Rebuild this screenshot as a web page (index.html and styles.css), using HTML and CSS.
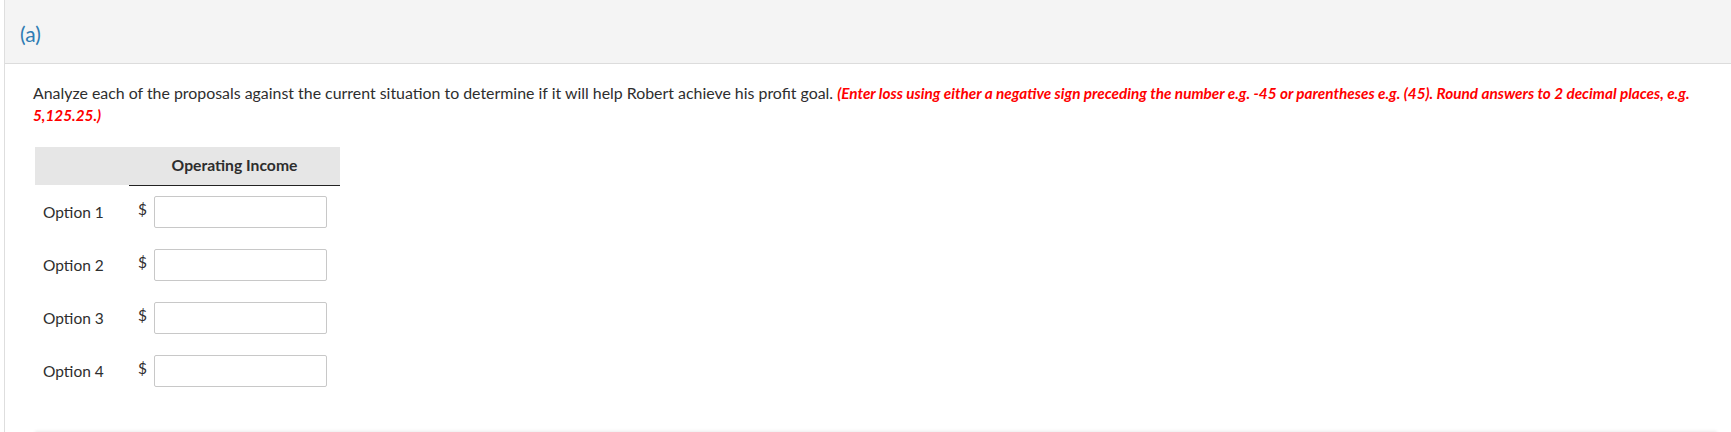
FILE: index.html
```html
<!DOCTYPE html>
<html>
<head>
<meta charset="utf-8">
<link rel="stylesheet" href="styles.css">
</head>
<body>
<div class="panel">
  <div class="panel-head"><span class="part">(a)</span></div>
  <div class="panel-body">
    <p class="prompt">Analyze each of the proposals against the current situation to determine if it will help Robert achieve his profit goal. <strong class="hint">(Enter loss using either a negative sign preceding the number e.g. -45 or parentheses e.g. (45). Round answers to 2 decimal places, e.g. 5,125.25.)</strong></p>
    <div class="grid">
      <div class="th th-blank"></div>
      <div class="th th-col">Operating Income</div>
      <div class="row"><div class="label">Option 1</div><div class="cell"><span class="cur">$</span><input class="field" type="text"></div></div>
      <div class="row"><div class="label">Option 2</div><div class="cell"><span class="cur">$</span><input class="field" type="text"></div></div>
      <div class="row"><div class="label">Option 3</div><div class="cell"><span class="cur">$</span><input class="field" type="text"></div></div>
      <div class="row"><div class="label">Option 4</div><div class="cell"><span class="cur">$</span><input class="field" type="text"></div></div>
    </div>
    <div class="next-box"></div>
  </div>
</div>
</body>
</html>
```
FILE: styles.css
```css
html, body {
  margin: 0;
  padding: 0;
  background: #fff;
  font-family: Lato, "Open Sans", "Liberation Sans", sans-serif;
  color: #333;
}
body {
  height: 432px;
  overflow: hidden;
}
.panel {
  margin-left: 4px;
  border-left: 1px solid #dedede;
  min-height: 432px;
}
.panel-head {
  height: 64px;
  box-sizing: border-box;
  background: #f4f4f4;
  border-bottom: 1px solid #dcdcdc;
  padding: 20px 0 0 15px;
}
.part {
  font-size: 21px;
  color: #2e7cb3;
  line-height: 28px;
}
.panel-body {
  padding: 0 14px 0 28px;
}
.prompt {
  margin: 0;
  padding-top: 18px;
  font-size: 15.9px;
  line-height: 22px;
  color: #2e2e2e;
}
.hint {
  color: #f00;
  font-style: italic;
  font-weight: 700;
  font-size: 15.3px;
}
.grid {
  margin: 21px 0 0 2px;
  width: 305px;
  display: grid;
  grid-template-columns: 94px 211px;
}
.th {
  background: #e6e6e6;
  height: 38px;
  box-sizing: border-box;
}
.th-col {
  border-bottom: 1.5px solid #222;
  font-weight: 700;
  font-size: 15.7px;
  color: #2d2d2d;
  text-align: center;
  line-height: 30px;
  padding-top: 3px;
  height: 39px;
}
.th-blank {
  height: 38px;
}
.row {
  grid-column: 1 / 3;
  display: grid;
  grid-template-columns: 94px 211px;
  height: 53px;
  align-items: start;
}
.label {
  padding: 16px 0 0 8px;
  font-size: 15.5px;
  line-height: 20px;
  color: #2e2e2e;
}
.cell {
  display: flex;
  align-items: flex-start;
  padding: 10px 0 0 9px;
}
.cur {
  font-size: 15.5px;
  line-height: 20px;
  padding-top: 3px;
  width: 16px;
  color: #2e2e2e;
}
.field {
  width: 173px;
  height: 32px;
  box-sizing: border-box;
  border: 1px solid #c8c8c8;
  border-radius: 2px;
  margin: 0;
  padding: 0 6px;
  font: inherit;
  background: #fff;
}
.next-box {
  margin: 34px 0 0 2px;
  height: 40px;
  border-top: 1px solid #d6d6d6;
  box-shadow: 0 -1px 3px rgba(0,0,0,0.08);
}
```
